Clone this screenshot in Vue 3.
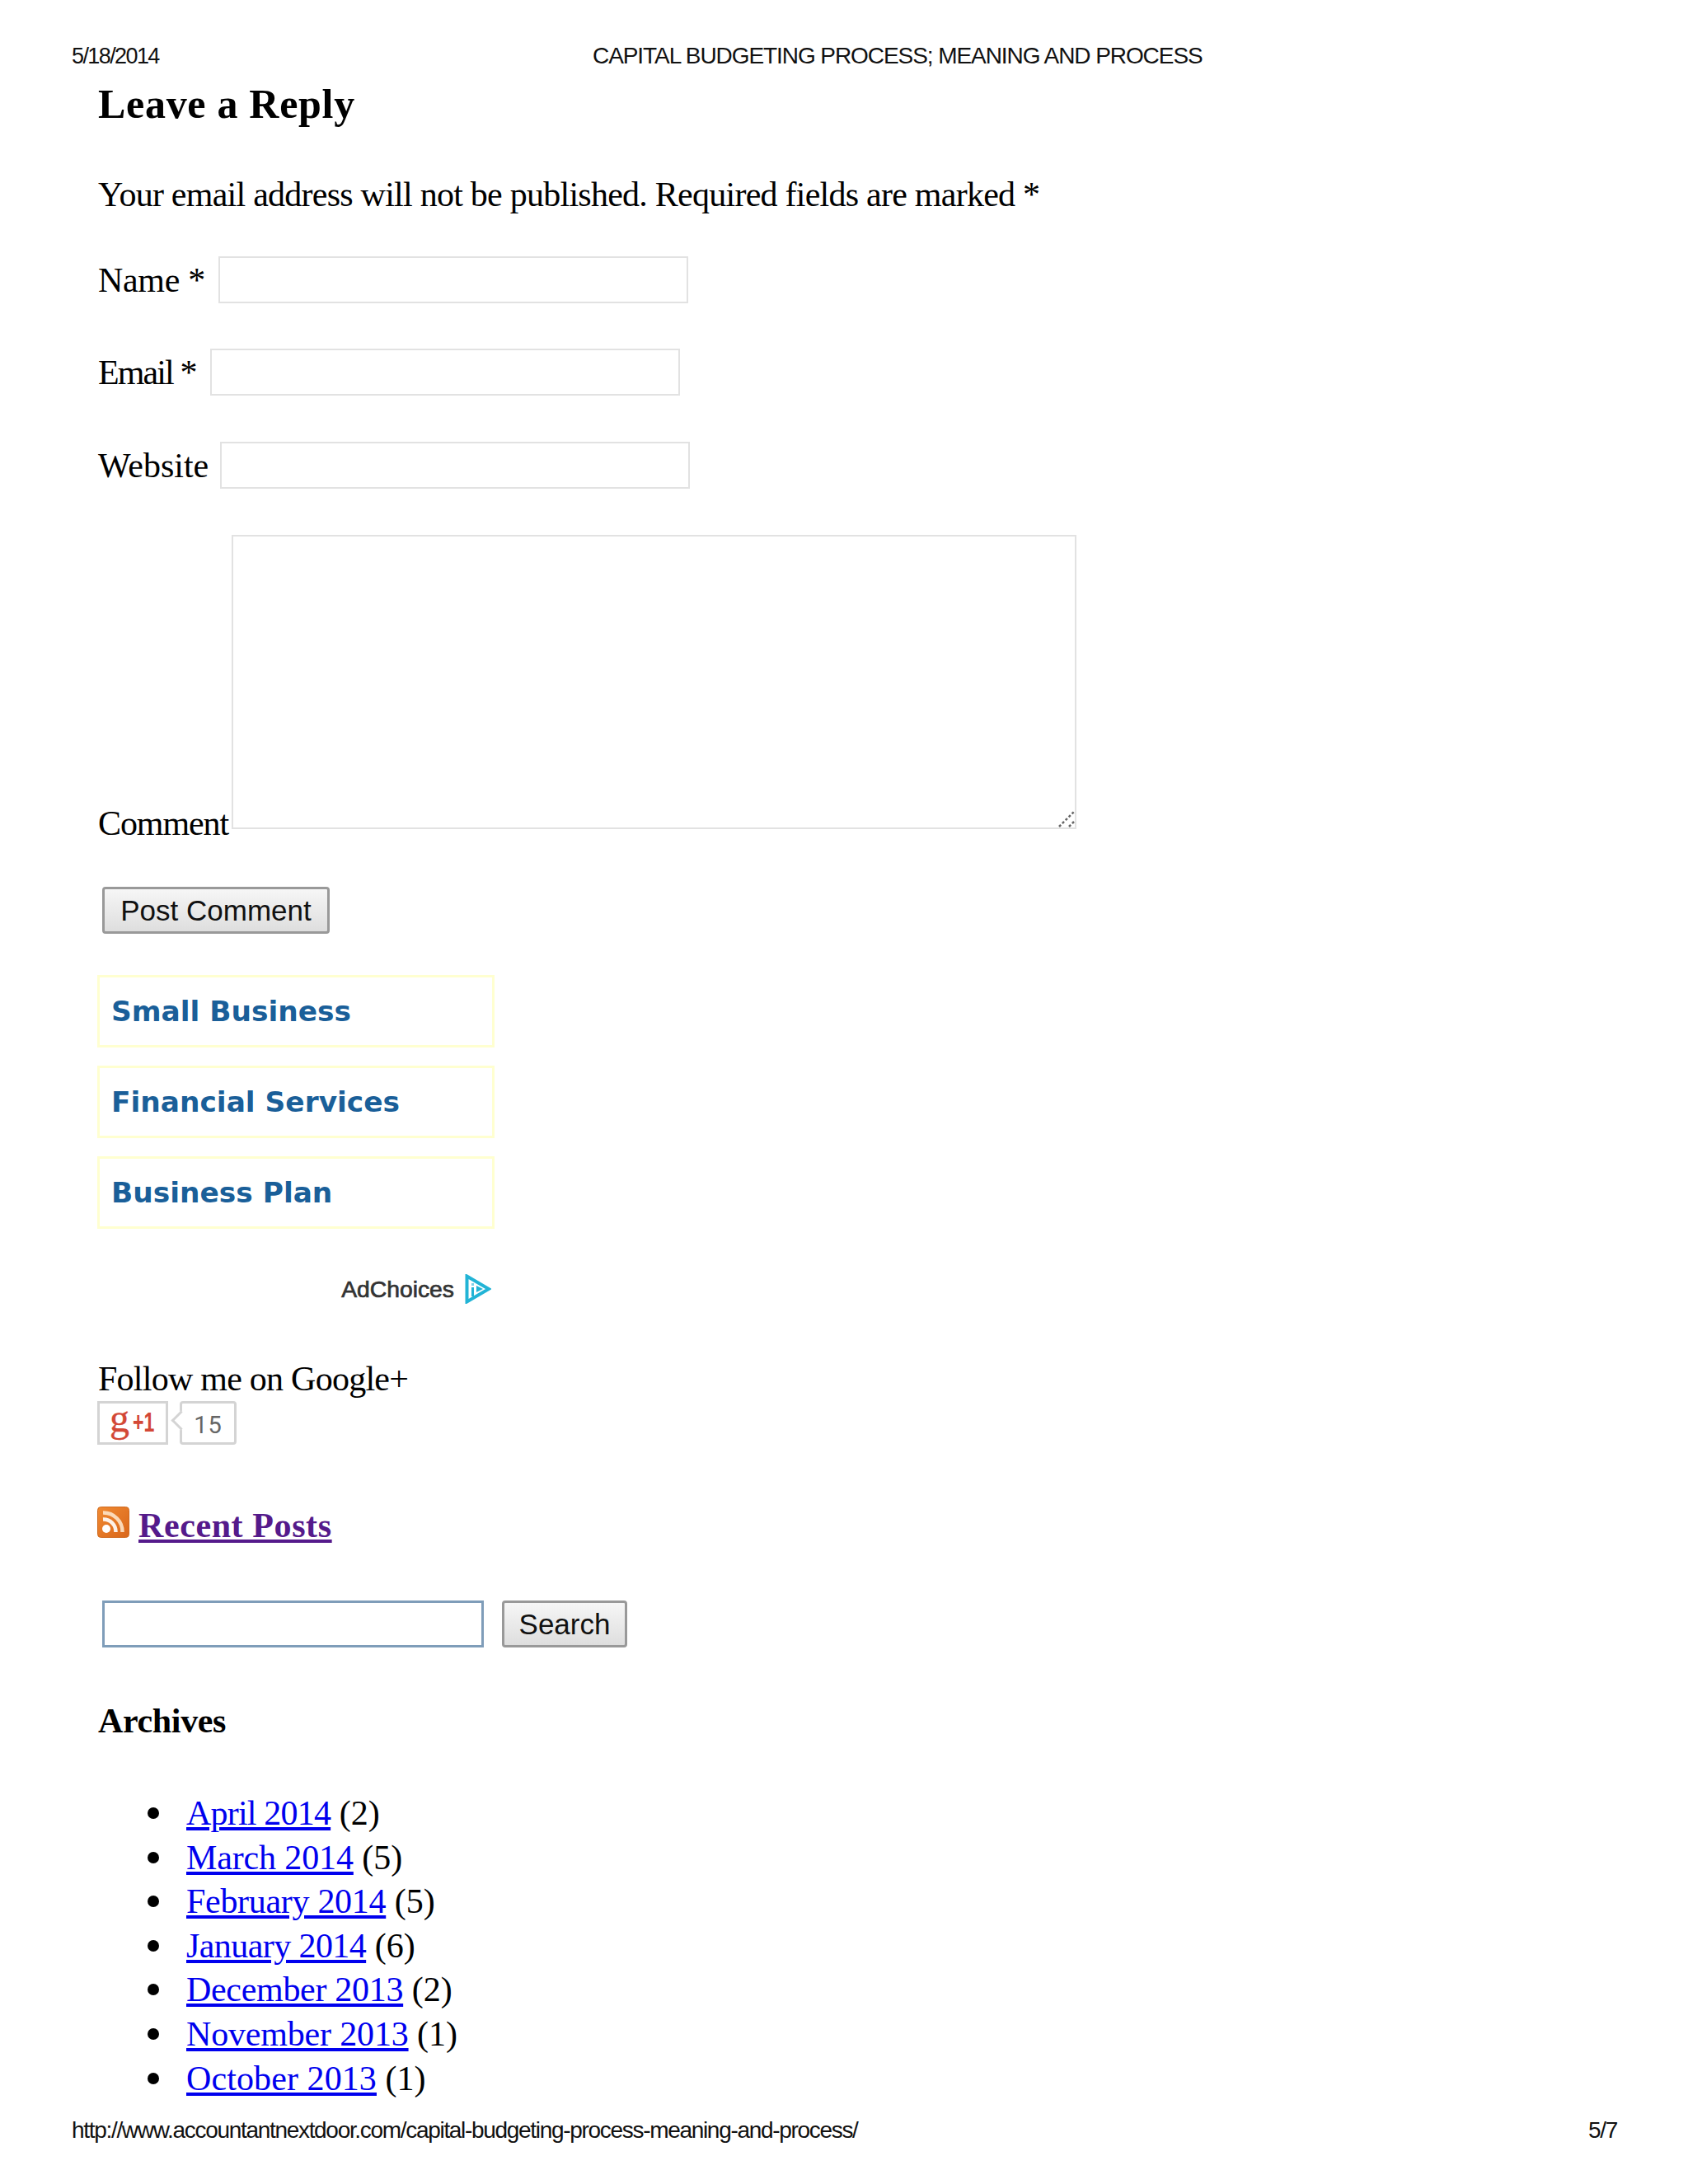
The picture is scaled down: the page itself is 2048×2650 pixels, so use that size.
<script setup>
const ads = ['Small Business', 'Financial Services', 'Business Plan']
const archives = [
  ['April 2014', 2, -0.8], ['March 2014', 5, -0.13], ['February 2014', 5, -0.3], ['January 2014', 6, -0.58],
  ['December 2013', 2, -0.3], ['November 2013', 1, -0.17], ['October 2013', 1, 0.1]
]
</script>

<template>
  <div class="page">
    <header class="print-head">
      <span class="date">5/18/2014</span>
      <span class="doc-title">CAPITAL BUDGETING PROCESS; MEANING AND PROCESS</span>
    </header>

    <main class="content">
      <h2 class="reply-title">Leave a Reply</h2>
      <p class="notes">Your email address will not be published. Required fields are marked *</p>

      <div class="field name-field"><label>Name *</label><input type="text" /></div>
      <div class="field email-field"><label>Email *</label><input type="text" /></div>
      <div class="field site-field"><label>Website</label><input type="text" /></div>
      <div class="field comment-field">
        <label>Comment</label>
        <div class="comment-box">
          <textarea></textarea>
          <svg class="grip" width="20" height="20" viewBox="0 0 20 20">
            <path d="M1 19 L19 1 M13 19 L19 13" stroke="#666" stroke-width="2.5" stroke-dasharray="3 2.5" fill="none" />
          </svg>
        </div>
      </div>

      <button class="btn post-btn" type="button">Post Comment</button>

      <div class="ads">
        <a v-for="ad in ads" :key="ad" class="ad">{{ ad }}</a>
      </div>
      <div class="adchoices">
        <span>AdChoices</span>
        <svg width="32" height="36" viewBox="0 0 32 36">
          <path d="M2.5 2.5 L29 18 L2.5 33.5 Z" fill="none" stroke="#22b4d6" stroke-width="4" stroke-linejoin="miter" />
          <rect x="8" y="11" width="3" height="3" fill="#7fd3e8" />
          <rect x="8" y="16" width="3" height="11" fill="#22b4d6" />
          <path d="M14 14 L22 18 L14 22 Z" fill="#22b4d6" />
        </svg>
      </div>

      <div class="follow">Follow me on Google+</div>
      <div class="plusone">
        <div class="g-box"><span class="g">g</span><span class="plus">+1</span></div>
        <div class="count">15</div>
      </div>

      <div class="recent">
        <svg class="rss" width="39" height="38" viewBox="0 0 39 38">
          <defs>
            <linearGradient id="rssBg" x1="0" y1="0" x2="1" y2="1">
              <stop offset="0" stop-color="#f08a32" />
              <stop offset="1" stop-color="#d9661a" />
            </linearGradient>
          </defs>
          <rect x="0.5" y="0.5" width="38" height="37" rx="4" fill="url(#rssBg)" stroke="#cf6a1f" />
          <circle cx="11" cy="27" r="5" fill="#fff" />
          <path d="M7 15.5 A15 15 0 0 1 22.5 31" fill="none" stroke="#fff" stroke-width="4.5" opacity="0.9" />
          <path d="M7 7.5 A23 23 0 0 1 30.5 31" fill="none" stroke="#fde3c8" stroke-width="4.5" opacity="0.9" />
        </svg>
        <a class="recent-link">Recent Posts</a>
      </div>

      <div class="search">
        <input type="text" />
        <button class="btn search-btn" type="button">Search</button>
      </div>

      <h3 class="archives-title">Archives</h3>
      <ul class="archives">
        <li v-for="row in archives" :key="row[0]"><a :style="{ letterSpacing: row[2] + 'px' }">{{ row[0] }}</a> ({{ row[1] }})</li>
      </ul>
    </main>

    <footer class="print-foot">
      <span class="url">http://www.accountantnextdoor.com/capital-budgeting-process-meaning-and-process/</span>
      <span>5/7</span>
    </footer>
  </div>
</template>

<style>
html, body { margin: 0; background: #fff; }
</style>

<style scoped>
.page {
  width: 2048px;
  height: 2650px;
  overflow: hidden;
  background: #fff;
  color: #000;
  font-family: "Liberation Serif", serif;
  box-sizing: border-box;
  padding-top: 51px;
}
.print-head, .print-foot {
  display: flex;
  font-family: "Liberation Sans", sans-serif;
  font-size: 28px;
  line-height: 34px;
  height: 34px;
  padding-left: 87px;
  color: #111;
}
.print-head .date { width: 632px; font-size: 27px; letter-spacing: -1.6px; }
.doc-title { letter-spacing: -1.07px; white-space: nowrap; }
.print-foot { justify-content: space-between; padding-right: 86px; margin-top: 19px; letter-spacing: -1.31px; }

.content { padding-left: 119px; }
.reply-title {
  margin: 11px 0 0;
  height: 60px;
  line-height: 60px;
  font-size: 50px;
  font-weight: 700;
  letter-spacing: 0.7px;
}
.notes {
  margin: 50px 0 0;
  height: 60px;
  line-height: 60px;
  font-size: 42px;
  letter-spacing: -0.75px;
  white-space: nowrap;
}
.field {
  display: flex;
  align-items: center;
  gap: 14px;
  height: 57px;
  margin-top: 55px;
  font-size: 42px;
}
.name-field { margin-top: 45px; }
.name-field label { letter-spacing: -0.3px; margin-right: 2px; }
.email-field label { letter-spacing: -1.9px; margin-right: 3px; }
.field input {
  box-sizing: border-box;
  width: 570px;
  height: 57px;
  border: 2px solid #e2e2e2;
  background: #fff;
  padding: 0;
  margin: 0;
}
.site-field { margin-top: 56px; }
.comment-field {
  height: 357px;
  align-items: flex-end;
  gap: 4px;
  margin-top: 56px;
}
.comment-field label { line-height: 44px; margin-bottom: -15px; letter-spacing: -1.1px; }
.comment-box { position: relative; width: 1025px; height: 357px; }
.comment-box textarea {
  box-sizing: border-box;
  width: 1025px;
  height: 357px;
  border: 2px solid #e2e2e2;
  padding: 0;
  margin: 0;
  display: block;
  resize: none;
}
.grip { position: absolute; right: 2px; bottom: 2px; }
.btn {
  display: block;
  box-sizing: border-box;
  height: 57px;
  padding: 0;
  border: 3px solid #999;
  border-radius: 4px;
  background: linear-gradient(#f6f6f6, #dedede);
  color: #111;
  font-family: "Liberation Sans", sans-serif;
  font-size: 35px;
}
.post-btn { width: 276px; margin: 70px 0 0 5px; }

.ads { margin: 50px 0 0 -1px; display: flex; flex-direction: column; gap: 22px; }
.ad {
  box-sizing: border-box;
  display: flex;
  align-items: center;
  width: 482px;
  height: 88px;
  padding-left: 14px;
  border: 3px solid #ffffd0;
  font-family: "DejaVu Sans", sans-serif;
  font-weight: 700;
  font-size: 34.4px;
  color: #1a5f99;
}
.adchoices {
  display: flex;
  align-items: center;
  gap: 13px;
  width: 477px;
  justify-content: flex-end;
  height: 36px;
  margin-top: 55px;
  font-family: "Liberation Sans", sans-serif;
  font-size: 28.3px;
  color: #333;
  -webkit-text-stroke: 0.7px #333;
}
.follow {
  margin-top: 66px;
  height: 50px;
  line-height: 50px;
  font-size: 42px;
  letter-spacing: -0.75px;
}
.plusone { display: flex; gap: 14px; margin: 2px 0 0 -1px; height: 53px; }
.g-box, .count {
  box-sizing: border-box;
  height: 53px;
  border: 3px solid #d4d4d4;
  background: #fff;
}
.g-box { width: 86px; display: flex; align-items: center; padding-left: 12px; color: #d34836; }
.g { font-family: "Liberation Serif", serif; font-size: 48px; line-height: 40px; margin-top: -11px; -webkit-text-stroke: 0.3px #d34836; }
.plus {
  display: inline-block;
  font-family: "Liberation Sans", sans-serif;
  font-weight: 700;
  font-size: 33px;
  line-height: 33px;
  margin: -3px 0 0 4px;
  transform: scaleX(0.7);
  transform-origin: left center;
}
.count {
  position: relative;
  width: 69px;
  border-radius: 4px;
  text-align: center;
  font-family: Roboto, sans-serif;
  font-size: 29px;
  line-height: 53px;
  letter-spacing: 1px;
  color: #666;
}
.count::before {
  content: "";
  position: absolute;
  left: -10px;
  top: 12px;
  width: 17px;
  height: 17px;
  background: #fff;
  border-left: 3px solid #d4d4d4;
  border-bottom: 3px solid #d4d4d4;
  box-sizing: border-box;
  transform: rotate(45deg);
}
.recent {
  display: flex;
  align-items: flex-end;
  gap: 11px;
  height: 38px;
  margin: 75px 0 0 -1px;
}
.rss { display: block; }
.recent-link {
  font-size: 42px;
  font-weight: 700;
  line-height: 38px;
  letter-spacing: 0.6px;
  color: #551a8b;
  text-decoration: underline;
  white-space: nowrap;
  position: relative;
  top: 4px;
}
.search { display: flex; gap: 22px; margin: 76px 0 0 5px; }
.search input {
  box-sizing: border-box;
  width: 463px;
  height: 57px;
  margin: 0;
  padding: 0;
  border: 3px solid #7f9db9;
  background: #fff;
}
.search-btn { width: 152px; }
.archives-title {
  margin: 64px 0 0;
  height: 50px;
  line-height: 50px;
  font-size: 42px;
  font-weight: 700;
  letter-spacing: -0.35px;
}
.archives {
  margin: 61px 0 0;
  padding: 0 0 0 107px;
  font-size: 42px;
  list-style: none;
}
.archives li { position: relative; height: 53.6px; line-height: 53.6px; }
.archives li::before {
  content: "";
  position: absolute;
  left: -47px;
  top: 19px;
  width: 14px;
  height: 14px;
  border-radius: 50%;
  background: #000;
}
.archives a { color: #0000ee; text-decoration: underline; }
</style>
